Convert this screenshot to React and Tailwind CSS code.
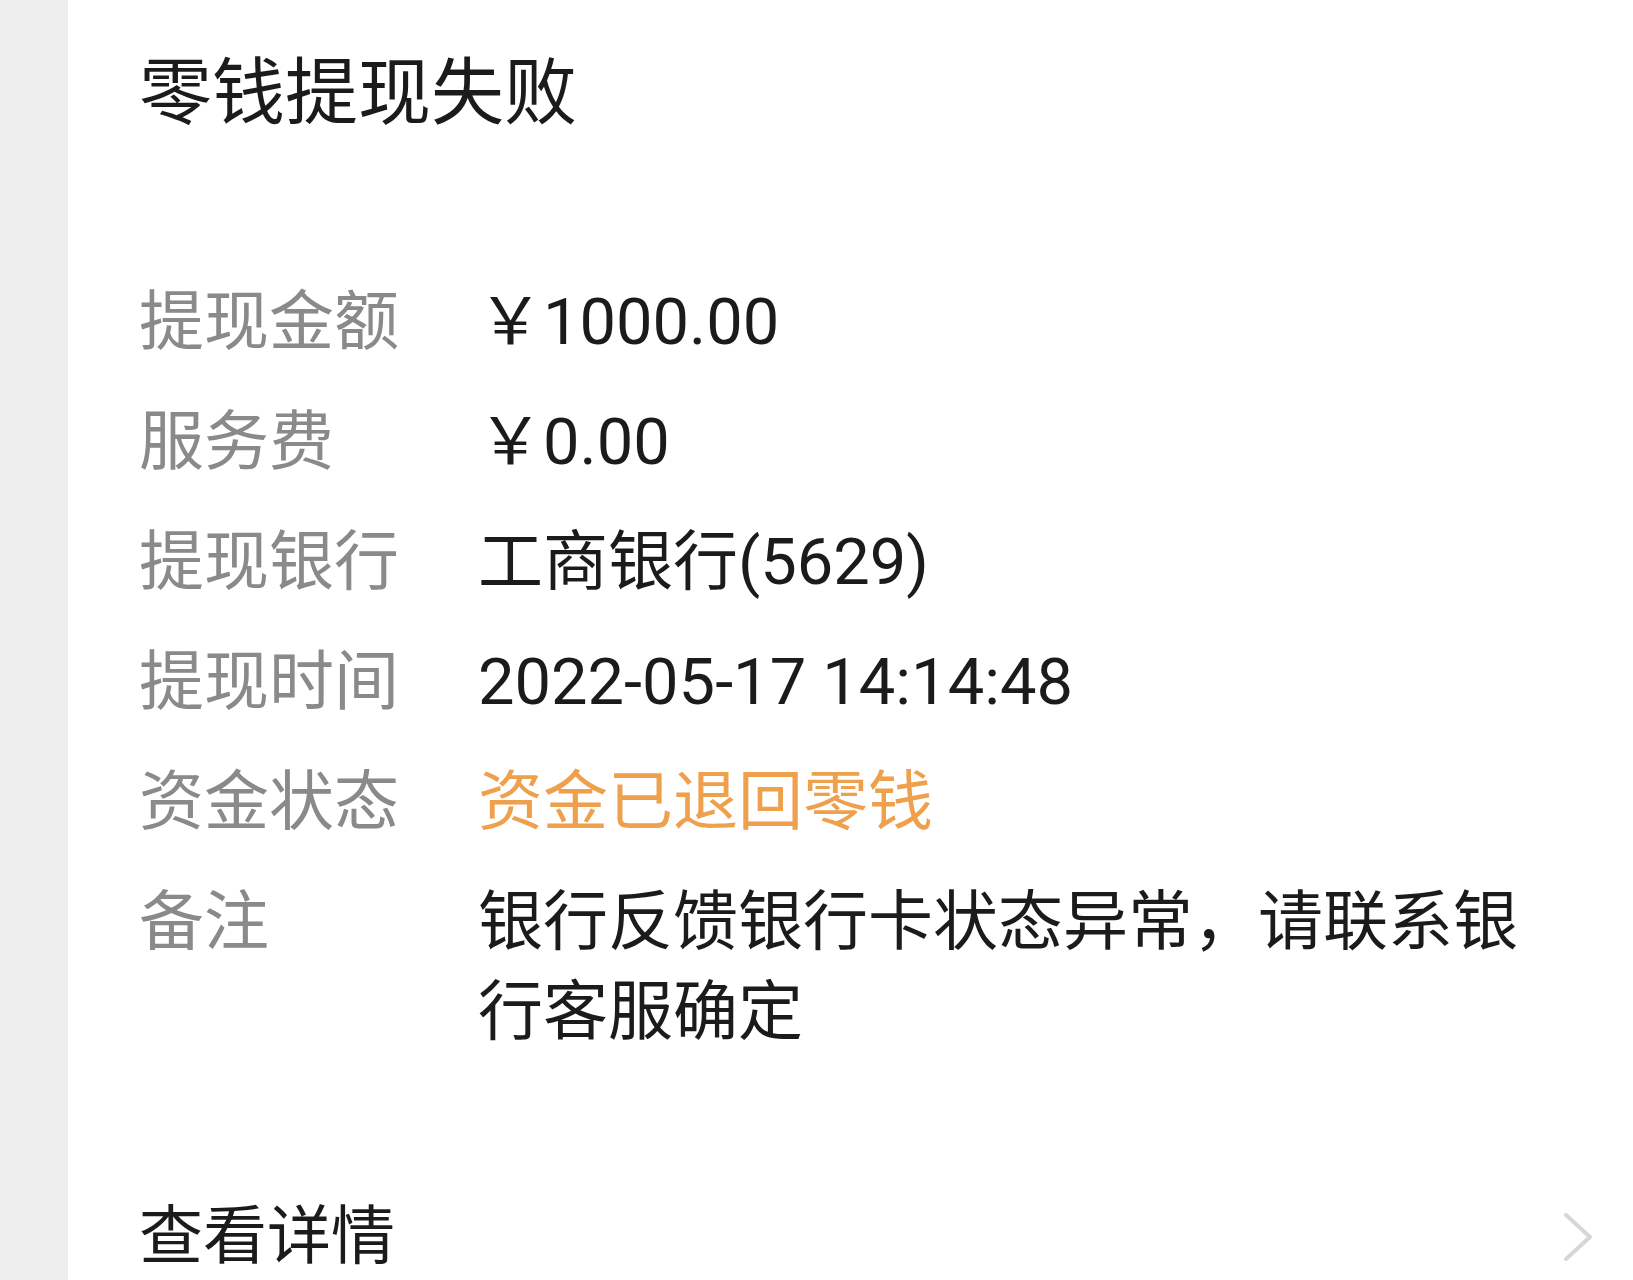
const rows = [
  { label: '提现金额', value: '￥1000.00' },
  { label: '服务费', value: '￥0.00' },
  { label: '提现银行', value: '工商银行(5629)' },
  { label: '提现时间', value: '2022-05-17 14:14:48' },
  { label: '资金状态', value: '资金已退回零钱', accent: true },
  { label: '备注', value: '银行反馈银行卡状态异常，请联系银行客服确定' },
]

const font = { fontFamily: "Roboto, 'Noto Sans CJK SC', sans-serif" }

export default function App() {
  return (
    <div className="flex h-[1280px] w-full overflow-hidden" style={font}>
      <div className="w-[68px] shrink-0 bg-[#ededed]" />
      <div className="flex flex-1 flex-col bg-white">
        <div className="pl-[71px] pr-[95px]">
          <h1 className="pt-[48px] text-[73px] leading-[90px] font-normal text-[#1b1b1b]">零钱提现失败</h1>

          <div className="mt-[139px] flex flex-col gap-[30px]">
            {rows.map(row => (
              <div key={row.label} className="flex text-[65px] leading-[90px]">
                <div className="w-[339px] shrink-0 text-[#8a8a8a]">{row.label}</div>
                <div className={`max-w-[1060px] flex-1 ${row.accent ? 'text-[#efa04c]' : 'text-[#1b1b1b]'}`}>
                  {row.value}
                </div>
              </div>
            ))}
          </div>
        </div>

        <div className="mt-[82px] h-[3px] w-full bg-[#f0f0f0]" />

        <div className="flex items-center justify-between pt-[53px] pl-[71px] pr-[38px]">
          <span className="text-[64px] leading-[90px] text-[#1b1b1b]">查看详情</span>
          <svg width="34" height="52" viewBox="0 0 34 52" fill="none">
            <polyline points="5,4 29,26 5,48" stroke="#d6d6d6" strokeWidth="4" strokeLinecap="round" strokeLinejoin="round" />
          </svg>
        </div>
      </div>
    </div>
  )
}
